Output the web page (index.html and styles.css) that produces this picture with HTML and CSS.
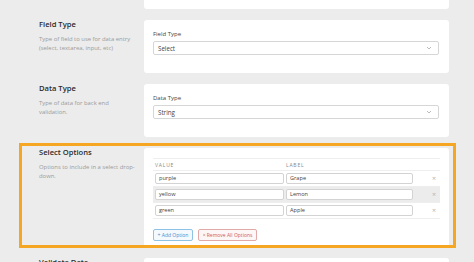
FILE: index.html
```html
<!DOCTYPE html>
<html>
<head>
  <link rel="stylesheet" href="styles.css">
</head>
<body>
  <div class="page">
    <div class="section">
      <div class="section-info"></div>
      <div class="card stub"></div>
    </div>

    <div class="section">
      <div class="section-info">
        <h3>Field Type</h3>
        <p>Type of field to use for data entry (select, textarea, input, etc)</p>
      </div>
      <div class="card">
        <label class="field-label">Field Type</label>
        <div class="select-box">
          <span>Select</span>
          <svg class="chevron" width="6" height="4" viewBox="0 0 6 4"><path d="M1 1 L3 3 L5 1" fill="none" stroke="#aaa" stroke-width="0.8"/></svg>
        </div>
      </div>
    </div>

    <div class="section">
      <div class="section-info">
        <h3>Data Type</h3>
        <p>Type of data for back end validation.</p>
      </div>
      <div class="card">
        <label class="field-label">Data Type</label>
        <div class="select-box">
          <span>String</span>
          <svg class="chevron" width="6" height="4" viewBox="0 0 6 4"><path d="M1 1 L3 3 L5 1" fill="none" stroke="#aaa" stroke-width="0.8"/></svg>
        </div>
      </div>
    </div>

    <div class="section highlighted">
      <div class="section-info">
        <h3>Select Options</h3>
        <p>Options to include in a select drop-down.</p>
      </div>
      <div class="card options-card">
        <div class="options-table">
          <div class="opt-row opt-head">
            <div class="cell">VALUE</div>
            <div class="cell">LABEL</div>
            <div class="cell"></div>
          </div>
          <div class="opt-row">
            <div class="cell"><div class="text-input">purple</div></div>
            <div class="cell"><div class="text-input">Grape</div></div>
            <div class="cell remove">&times;</div>
          </div>
          <div class="opt-row hover">
            <div class="cell"><div class="text-input">yellow</div></div>
            <div class="cell"><div class="text-input">Lemon</div></div>
            <div class="cell remove">&times;</div>
          </div>
          <div class="opt-row">
            <div class="cell"><div class="text-input">green</div></div>
            <div class="cell"><div class="text-input">Apple</div></div>
            <div class="cell remove">&times;</div>
          </div>
        </div>
        <div class="buttons">
          <button class="btn btn-add">+ Add Option</button>
          <button class="btn btn-remove">&times; Remove All Options</button>
        </div>
      </div>
      <div class="focus-ring"></div>
    </div>

    <div class="section">
      <div class="section-info">
        <h3>Validate Data</h3>
      </div>
      <div class="card tall"></div>
    </div>
  </div>
</body>
</html>
```

FILE: styles.css
```css
body {
  margin: 0;
  background-color: #ececec;
  font-family: "Open Sans", "Liberation Sans", sans-serif;
  color: #333;
  overflow: hidden;
}

.page {
  width: 474px;
}

.section {
  display: flex;
  margin-bottom: 11px;
  position: relative;
}

.section-info {
  width: 144px;
  box-sizing: border-box;
  padding: 0 8px 0 39px;
}

.section-info h3 {
  margin: 0;
  font-size: 7.6px;
  font-weight: 600;
  line-height: 9px;
  color: #2b2b2b;
}

.section-info p {
  margin: 6px 0 0;
  font-size: 5.9px;
  line-height: 9px;
  color: #9a9a9a;
}

.card {
  width: 305px;
  box-sizing: border-box;
  background-color: white;
  border-radius: 3px;
  padding: 10px 10px 18px 9px;
}

.card.stub {
  height: 9px;
  padding: 0;
  border-radius: 0 0 3px 3px;
}

.card.tall {
  height: 40px;
}

.field-label {
  display: block;
  font-size: 6px;
  line-height: 9px;
  margin-bottom: 2px;
  color: #444;
}

.select-box {
  display: flex;
  align-items: center;
  justify-content: space-between;
  height: 14px;
  box-sizing: border-box;
  border: 1px solid #d6d6d6;
  border-radius: 2px;
  padding: 0 6px 0 4px;
  font-size: 6.2px;
  color: #444;
}

.highlighted {
  margin-bottom: 10px;
}

.options-card {
  height: 100px;
  padding: 10px 9px 0 9px;
}

.options-table {
  border-top: 1px solid #eeeeee;
}

.opt-row {
  display: grid;
  grid-template-columns: 131px 129px 1fr;
  height: 16px;
  align-items: center;
  border-bottom: 1px solid #eeeeee;
  box-sizing: border-box;
}

.opt-row.opt-head {
  height: 12px;
  font-size: 5px;
  letter-spacing: 0.8px;
  color: #888;
}

.opt-row.hover {
  background-color: #ececec;
}

.cell {
  padding-left: 2px;
}

.text-input {
  height: 11px;
  box-sizing: border-box;
  border: 1px solid #d3d3d3;
  border-radius: 2px;
  background-color: white;
  font-size: 5.6px;
  line-height: 9px;
  padding-left: 3px;
  color: #444;
}

.remove {
  text-align: right;
  padding-right: 4px;
  font-size: 7px;
  color: #b5b5b5;
}

.buttons {
  display: flex;
  gap: 5px;
  margin-top: 10px;
}

.btn {
  height: 12px;
  padding: 0;
  font-family: "Open Sans", "Liberation Sans", sans-serif;
  font-size: 5px;
  white-space: nowrap;
  border-radius: 2px;
  cursor: pointer;
}

.btn-add {
  width: 40px;
  border: 1px solid #8fc3e6;
  background-color: #f4f9fd;
  color: #3d8fd1;
}

.btn-remove {
  width: 59px;
  border: 1px solid #e2a9a9;
  background-color: #fdf6f6;
  color: #cf5b5b;
}

.focus-ring {
  position: absolute;
  left: 19px;
  top: -5px;
  width: 437px;
  height: 105px;
  box-sizing: border-box;
  border: 3px solid #f5a623;
  pointer-events: none;
}
```
